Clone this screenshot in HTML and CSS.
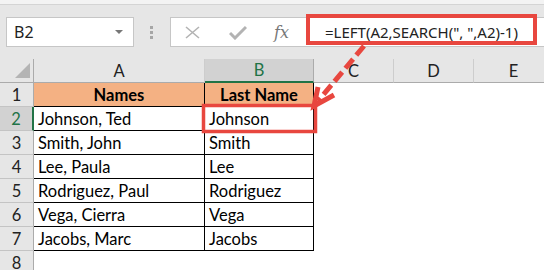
FILE: index.html
```html
<!DOCTYPE html>
<html lang="en">
<head>
    <meta charset="UTF-8">
    <title>LEFT + SEARCH example</title>
    <link rel="stylesheet" href="styles.css">
</head>
<body>

<div class="toolbar">
    <div class="top-strip"></div>
    <div class="bar">
        <div class="namebox">
            <span>B2</span>
            <span class="caret"></span>
        </div>
        <div class="grip"><i></i><i></i><i></i></div>
        <div class="formula">
            <svg class="icon-x" width="17" height="13" viewBox="0 0 17 13">
                <path d="M2 1 L15 12 M15 1 L2 12" stroke="#b3b3b3" stroke-width="1.6" fill="none"/>
            </svg>
            <svg class="icon-check" width="18" height="15" viewBox="0 0 18 15">
                <path d="M1 8 L6 13 L17 2" stroke="#b3b3b3" stroke-width="3" fill="none"/>
            </svg>
            <span class="fx">fx</span>
            <span class="formula-text">=LEFT(A2,SEARCH(", ",A2)-1)</span>
        </div>
    </div>
</div>

<table class="sheet">
    <colgroup>
        <col class="c-rh"><col class="c-a"><col class="c-b"><col class="c-n"><col class="c-n"><col class="c-n">
    </colgroup>
    <tr class="hdr">
        <td class="corner"><span class="tri"></span></td>
        <td class="colh">A</td>
        <td class="colh sel">B</td>
        <td class="colh">C</td>
        <td class="colh">D</td>
        <td class="colh">E</td>
    </tr>
    <tr>
        <td class="rowh">1</td>
        <td class="cell head">Names</td>
        <td class="cell head">Last Name</td>
        <td></td><td></td><td></td>
    </tr>
    <tr>
        <td class="rowh sel">2</td>
        <td class="cell">Johnson, Ted</td>
        <td class="cell">Johnson</td>
        <td></td><td></td><td></td>
    </tr>
    <tr>
        <td class="rowh">3</td>
        <td class="cell">Smith, John</td>
        <td class="cell">Smith</td>
        <td></td><td></td><td></td>
    </tr>
    <tr>
        <td class="rowh">4</td>
        <td class="cell">Lee, Paula</td>
        <td class="cell">Lee</td>
        <td></td><td></td><td></td>
    </tr>
    <tr>
        <td class="rowh">5</td>
        <td class="cell">Rodriguez, Paul</td>
        <td class="cell">Rodriguez</td>
        <td></td><td></td><td></td>
    </tr>
    <tr>
        <td class="rowh">6</td>
        <td class="cell">Vega, Cierra</td>
        <td class="cell">Vega</td>
        <td></td><td></td><td></td>
    </tr>
    <tr>
        <td class="rowh">7</td>
        <td class="cell">Jacobs, Marc</td>
        <td class="cell">Jacobs</td>
        <td></td><td></td><td></td>
    </tr>
    <tr>
        <td class="rowh">8</td>
        <td></td><td></td><td></td><td></td><td></td>
    </tr>
</table>

<!-- red annotation: boxes + dashed arrow -->
<svg class="marks" width="544" height="270" viewBox="0 0 544 270">
    <rect x="308" y="16" width="227" height="27" fill="none" stroke="#e8473f" stroke-width="4"/>
    <rect x="203.5" y="105.5" width="112" height="26" fill="none" stroke="#e8473f" stroke-width="3.5"/>
    <line x1="364" y1="46" x2="318" y2="101" stroke="#e8473f" stroke-width="5" stroke-dasharray="12 5"/>
    <polyline points="318,87 314,106 334,95" fill="none" stroke="#e8473f" stroke-width="5" stroke-linejoin="miter"/>
</svg>

</body>
</html>
```

FILE: styles.css
```css
* {
    box-sizing: border-box;
}
body {
    margin: 0;
    width: 544px;
    height: 270px;
    overflow: hidden;
    position: relative;
    background: #fff;
    font-family: Lato, "Liberation Sans", sans-serif;
}

/* formula bar area */
.toolbar {
    height: 59px;
    background: #e6e6e6;
}
.top-strip {
    height: 5px;
    background: #f3f3f3;
    border-bottom: 1px solid #d4d4d4;
}
.bar {
    display: flex;
    align-items: center;
    padding: 12px 0 0 6px;
}
.namebox {
    width: 128px;
    height: 30px;
    background: #fff;
    border: 1px solid #c6c6c6;
    display: flex;
    align-items: center;
    justify-content: space-between;
    padding: 0 10px 0 7px;
    font-family: "Noto Sans", sans-serif;
    font-size: 16px;
    color: #222;
}
.caret {
    width: 0;
    height: 0;
    border-left: 4px solid transparent;
    border-right: 4px solid transparent;
    border-top: 4px solid #777;
}
.grip {
    display: flex;
    flex-direction: column;
    gap: 2px;
    margin-left: 16px;
}
.grip i {
    display: block;
    width: 3px;
    height: 3px;
    background: #a6a6a6;
}
.formula {
    flex: 1;
    height: 30px;
    margin-left: 17px;
    background: #fff;
    border: 1px solid #c6c6c6;
    border-right: none;
    display: flex;
    align-items: center;
    padding-left: 13px;
}
.icon-check {
    margin-left: 28px;
}
.fx {
    width: 18px;
    margin-left: 27px;
    font-family: "DejaVu Serif", serif;
    font-style: italic;
    font-size: 16px;
    color: #777;
}
.formula-text {
    margin-left: 33px;
    font-family: "Noto Sans", sans-serif;
    font-size: 15px;
    color: #222;
    white-space: nowrap;
}

/* grid */
.sheet {
    table-layout: fixed;
    border-collapse: separate;
    border-spacing: 0;
    width: 554px;
    font-size: 16.5px;
}
.c-rh { width: 34px; }
.c-a { width: 171px; }
.c-b { width: 109px; }
.c-n { width: 80px; }
.sheet td {
    height: 24px;
    padding: 0;
    white-space: nowrap;
    overflow: hidden;
}
.hdr td {
    background: #e6e6e6;
    border-bottom: 1px solid #ababab;
    border-right: 1px solid #cdcdcd;
    text-align: center;
    color: #222;
}
.hdr td.sel {
    background: #d2d2d2;
    color: #217346;
    border-bottom: 2px solid #217346;
    border-right-color: #ababab;
}
.hdr td.corner {
    border-right-color: #ababab;
    text-align: right;
    vertical-align: bottom;
    padding: 0 3px 4px 0;
    line-height: 0;
}
.tri {
    display: inline-block;
    width: 0;
    height: 0;
    border-left: 15px solid transparent;
    border-bottom: 15px solid #b4b4b4;
}
.rowh {
    background: #e6e6e6;
    text-align: center;
    color: #222;
    border-right: 1px solid #ababab;
    border-bottom: 1px solid #c4c4c4;
}
.rowh.sel {
    background: #d2d2d2;
    color: #217346;
    border-right: 2px solid #217346;
}
.cell {
    border-right: 1px solid #000;
    border-bottom: 1px solid #000;
    padding: 0 4px !important;
    color: #000;
}
.cell.head {
    background: #f4b183;
    font-weight: bold;
    text-align: center;
}

.marks {
    position: absolute;
    left: 0;
    top: 0;
}
```
